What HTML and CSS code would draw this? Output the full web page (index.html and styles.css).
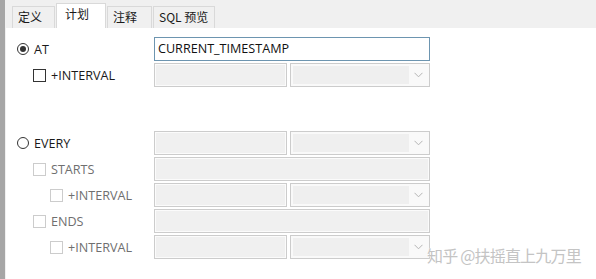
FILE: index.html
```html
<!DOCTYPE html>
<html>
<head>
<meta charset="utf-8">
<link rel="stylesheet" href="styles.css">
</head>
<body>
<div class="window">
  <div class="strip"></div>
  <div class="main">
    <div class="tabs">
      <div class="tab">定义</div>
      <div class="tab active">计划</div>
      <div class="tab">注释</div>
      <div class="tab">SQL 预览</div>
    </div>
    <div class="content">
      <div class="form">
        <div class="label"><span class="radio checked"></span><span>AT</span></div>
        <div class="input focus">CURRENT_TIMESTAMP</div>

        <div class="label l1"><span class="check"></span><span>+INTERVAL</span></div>
        <div class="pair"><div class="field"></div><div class="select"><div class="sel-fill"></div><div class="sel-btn"><svg width="9" height="6" viewBox="0 0 9 6"><path d="M0.5 0.8 L4.5 4.8 L8.5 0.8" fill="none" stroke="#b4b4b4" stroke-width="1"/></svg></div></div></div>

        <div class="spacer"></div>

        <div class="label"><span class="radio"></span><span>EVERY</span></div>
        <div class="pair"><div class="field"></div><div class="select"><div class="sel-fill"></div><div class="sel-btn"><svg width="9" height="6" viewBox="0 0 9 6"><path d="M0.5 0.8 L4.5 4.8 L8.5 0.8" fill="none" stroke="#b4b4b4" stroke-width="1"/></svg></div></div></div>

        <div class="label l1 dis"><span class="check"></span><span>STARTS</span></div>
        <div class="field wide"></div>

        <div class="label l2 dis"><span class="check"></span><span>+INTERVAL</span></div>
        <div class="pair"><div class="field"></div><div class="select"><div class="sel-fill"></div><div class="sel-btn"><svg width="9" height="6" viewBox="0 0 9 6"><path d="M0.5 0.8 L4.5 4.8 L8.5 0.8" fill="none" stroke="#b4b4b4" stroke-width="1"/></svg></div></div></div>

        <div class="label l1 dis"><span class="check"></span><span>ENDS</span></div>
        <div class="field wide"></div>

        <div class="label l2 dis"><span class="check"></span><span>+INTERVAL</span></div>
        <div class="pair"><div class="field"></div><div class="select"><div class="sel-fill"></div><div class="sel-btn"><svg width="9" height="6" viewBox="0 0 9 6"><path d="M0.5 0.8 L4.5 4.8 L8.5 0.8" fill="none" stroke="#b4b4b4" stroke-width="1"/></svg></div></div></div>
      </div>
    </div>
  </div>
  <div class="watermark">知乎 @扶摇直上九万里</div>
</div>
</body>
</html>
```
FILE: styles.css
```css
html, body {
  margin: 0;
  padding: 0;
  background: #ffffff;
}
.window {
  position: relative;
  display: flex;
  width: 596px;
  height: 279px;
  overflow: hidden;
  font-family: "Open Sans", "Noto Sans CJK SC", sans-serif;
  font-size: 12.6px;
  color: #1a1a1a;
}
.strip {
  width: 5px;
  background: #a6a6a6;
  flex: none;
}
.main {
  flex: 1;
  display: flex;
  flex-direction: column;
}
.tabs {
  height: 28px;
  background: #f0f0f0;
  display: flex;
  align-items: flex-end;
  padding-left: 7px;
  box-sizing: border-box;
  flex: none;
}
.tab {
  height: 22px;
  box-sizing: border-box;
  border: 1px solid #d9d9d9;
  border-bottom: none;
  background: #f0f0f0;
  font-family: "Noto Sans CJK SC", sans-serif;
  font-size: 12px;
  line-height: 20px;
  padding: 0 5px;
  margin-right: 1px;
  color: #1a1a1a;
}
.tab:first-child { width: 43px; }
.tab:nth-child(3) { width: 45px; }
.tab:nth-child(4) { width: 62px; }
.tab.active {
  height: 25px;
  width: 50px;
  background: #ffffff;
  border-color: #d9d9d9;
  padding-left: 8px;
}
.content {
  flex: 1;
  background: #ffffff;
  border-left: 1px solid #f0f0f0;
  padding: 9px 0 0 11px;
}
.form {
  display: grid;
  grid-template-columns: 137px 276px;
  grid-template-rows: 24px 24px 40px 24px 24px 24px 24px 24px;
  row-gap: 2px;
}
.spacer {
  grid-column: 1 / 3;
}
.label {
  display: flex;
  align-items: center;
  gap: 5px;
}
.l1 { padding-left: 16px; }
.l2 { padding-left: 33px; }
.dis { color: #6f6f6f; }
.radio {
  width: 12px;
  height: 12px;
  box-sizing: border-box;
  border: 1px solid #333333;
  border-radius: 50%;
  position: relative;
  flex: none;
}
.radio.checked::after {
  content: "";
  position: absolute;
  left: 2px;
  top: 2px;
  width: 6px;
  height: 6px;
  border-radius: 50%;
  background: #333333;
}
.check {
  width: 13px;
  height: 13px;
  box-sizing: border-box;
  border: 1px solid #333333;
  background: #ffffff;
  flex: none;
}
.dis .check { border-color: #cccccc; }
.input {
  border: 1px solid #6d95b0;
  box-sizing: border-box;
  padding: 0 3px;
  line-height: 22px;
  color: #111111;
}
.pair {
  display: flex;
  gap: 3px;
}
.field {
  box-sizing: border-box;
  border: 1px solid #cccccc;
  background: #f0f0f0;
  box-shadow: inset 0 0 0 1px #fbfbfb;
}
.pair .field { width: 133px; }
.select {
  flex: 1;
  box-sizing: border-box;
  border: 1px solid #cccccc;
  display: flex;
  padding: 2px;
  background: #f9f9f9;
}
.sel-fill {
  flex: 1;
  background: #efefef;
}
.sel-btn {
  width: 18px;
  display: flex;
  align-items: center;
  justify-content: center;
}
.watermark {
  position: absolute;
  left: 427px;
  top: 243px;
  font-family: "Noto Sans CJK SC", sans-serif;
  font-size: 16px;
  color: #c4c4c4;
  text-shadow: 0 0 1px #ffffff, 0 0 1px #ffffff;
  letter-spacing: -0.8px;
  white-space: nowrap;
}
```
